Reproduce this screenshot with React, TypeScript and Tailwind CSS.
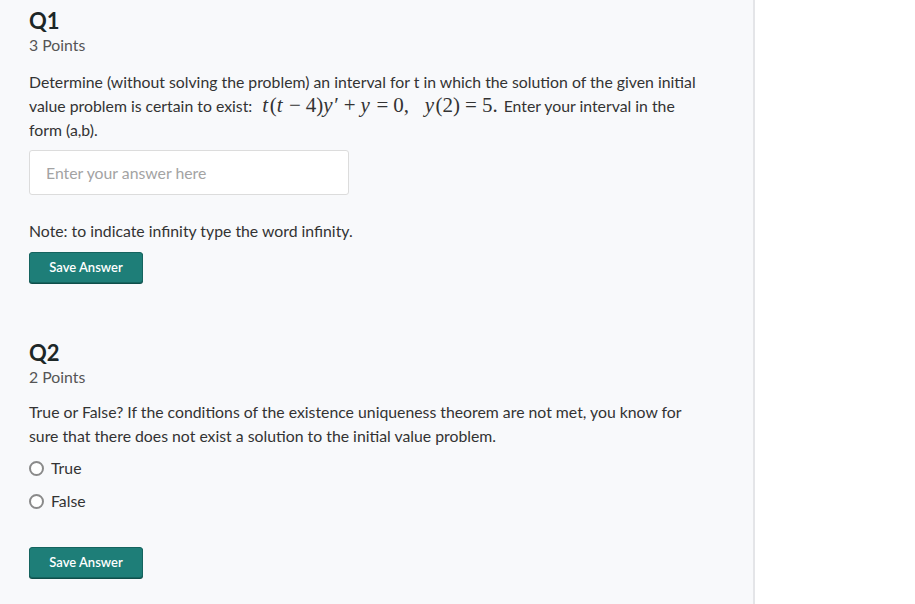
import React from "react";

function SaveButton() {
  return (
    <button className="h-[31px] w-[114px] rounded-[3px] border border-[#15645f] bg-[#1e7e78] text-[13px] font-semibold text-white shadow-[0_1px_0_#0f4e4a]">
      Save Answer
    </button>
  );
}

function Radio({ label }: { label: string }) {
  return (
    <label className="flex h-[24px] items-center gap-[7px]">
      <span className="h-[15px] w-[15px] rounded-full border-2 border-[#8a8a8a] bg-white" />
      <span>{label}</span>
    </label>
  );
}

function Op({ c }: { c: string }) {
  return <span className="mx-[5px] not-italic">{c}</span>;
}

function V({ c }: { c: string }) {
  return <i className="pr-[1.5px]">{c}</i>;
}

export default function App() {
  return (
    <div className="flex h-[604px] w-[915px] bg-white font-['Lato',sans-serif] text-[15.8px] text-[#333]">
      <div className="h-full w-[755px] border-r-2 border-[#e4e5e8] bg-[#f8f9fb] pl-[29px] pr-[20px]">
        <div className="pt-[9px]">
          <h2 className="text-[22px] font-bold leading-[24px] text-[#1d2727]">Q1</h2>
          <div className="leading-[24px] text-[#555]">3 Points</div>
          <p className="mt-[13px] max-w-[672px] leading-[24px]">
            Determine (without solving the problem) an interval for t in which the solution of the given initial value problem is certain to exist:{" "}
            <span className="mx-[6px] inline-block font-['Liberation_Serif',serif] text-[21px] leading-[20px]">
              <V c="t" />(<V c="t" />
              <Op c="−" />4)<V c="y" />′<Op c="+" />
              <V c="y" />
              <Op c="=" />0,&nbsp;&nbsp;&nbsp;<V c="y" />(2)<Op c="=" />5.
            </span>
            Enter your interval in the form (a,b).
          </p>
          <div className="mt-[8px] flex h-[45px] w-[320px] items-center rounded-[3px] border border-[#dcdcdc] bg-white px-[16px] text-[#a3a3a3]">
            Enter your answer here
          </div>
          <p className="mt-[24px] leading-[24px]">Note: to indicate infinity type the word infinity.</p>
          <div className="mt-[9px]">
            <SaveButton />
          </div>
        </div>
        <div className="mt-[58px]">
          <h2 className="text-[22px] font-bold leading-[24px] text-[#1d2727]">Q2</h2>
          <div className="leading-[24px] text-[#555]">2 Points</div>
          <p className="mt-[11px] max-w-[672px] leading-[24px]">
            True or False? If the conditions of the existence uniqueness theorem are not met, you know for sure that there does not exist a solution to the initial value problem.
          </p>
          <div className="mt-[8px] flex flex-col gap-[9px]">
            <Radio label="True" />
            <Radio label="False" />
          </div>
          <div className="mt-[34px]">
            <SaveButton />
          </div>
        </div>
      </div>
      <div className="flex-1" />
    </div>
  );
}
